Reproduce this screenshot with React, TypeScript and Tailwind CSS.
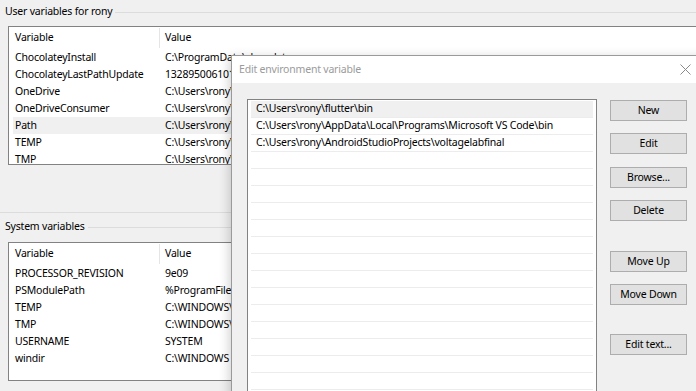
import React from "react";

const font = { fontFamily: '"Noto Sans", "Segoe UI", Arial, sans-serif' };

const userVars = [
  ["ChocolateyInstall", "C:\\ProgramData\\chocolatey"],
  ["ChocolateyLastPathUpdate", "132895006101011234"],
  ["OneDrive", "C:\\Users\\rony\\OneDrive"],
  ["OneDriveConsumer", "C:\\Users\\rony\\OneDrive"],
  ["Path", "C:\\Users\\rony\\flutter\\bin;C:\\Users\\rony\\AppData"],
  ["TEMP", "C:\\Users\\rony\\AppData\\Local\\Temp"],
  ["TMP", "C:\\Users\\rony\\AppData\\Local\\Temp"],
];

const systemVars = [
  ["PROCESSOR_REVISION", "9e09"],
  ["PSModulePath", "%ProgramFiles%\\WindowsPowerShell\\Modules"],
  ["TEMP", "C:\\WINDOWS\\TEMP"],
  ["TMP", "C:\\WINDOWS\\TEMP"],
  ["USERNAME", "SYSTEM"],
  ["windir", "C:\\WINDOWS"],
];

const pathEntries = [
  "C:\\Users\\rony\\flutter\\bin",
  "C:\\Users\\rony\\AppData\\Local\\Programs\\Microsoft VS Code\\bin",
  "C:\\Users\\rony\\AndroidStudioProjects\\voltagelabfinal",
];

// Segoe UI 9pt stand-in
const txt = "text-[10.5px] tracking-[-0.2px] text-[#000]";

function GroupLabel({ text }: { text: string }) {
  return (
    <div className="flex items-center h-[24px] shrink-0">
      <span className={`pl-[5px] pr-[3px] ${txt} whitespace-nowrap`}>{text}</span>
      <div className="flex-1 h-px bg-[#dcdcdc]" />
    </div>
  );
}

function VarList({ rows, selected }: { rows: string[][]; selected?: number }) {
  return (
    <div className="ml-[8px] w-[720px] h-[139px] shrink-0 bg-white border border-[#828282] overflow-hidden">
      <div className={`flex h-[22px] items-center ${txt}`}>
        <div className="w-[150px] pl-[6px]">Variable</div>
        <div className="w-px h-[20px] bg-[#e5e5e5]" />
        <div className="pl-[5px]">Value</div>
      </div>
      <div className="px-[4px]">
        {rows.map(([k, v], i) => (
          <div
            key={k + i}
            className={`flex h-[17px] items-center ${txt} whitespace-nowrap ${
              i === selected ? "bg-[#f0f0f0]" : ""
            }`}
          >
            <div className="w-[147px] pl-[2px] shrink-0">{k}</div>
            <div className="pl-[5px]">{v}</div>
          </div>
        ))}
      </div>
    </div>
  );
}

function Btn({ label, mt }: { label: string; mt: string }) {
  return (
    <div
      className={`${mt} w-[77px] h-[21px] shrink-0 flex items-center justify-center bg-[#e1e1e1] border border-[#adadad] ${txt}`}
    >
      {label}
    </div>
  );
}

export default function App() {
  return (
    <div className="relative w-[696px] h-[391px] overflow-hidden bg-[#f0f0f0]" style={font}>
      <div className="flex flex-col">
        <GroupLabel text="User variables for rony" />
        <div className="h-[2px] shrink-0" />
        <VarList rows={userVars} selected={4} />
        <div className="h-[47px] shrink-0" />
        <div className="h-px bg-[#dcdcdc] shrink-0" />
        <div className="h-[2px] shrink-0" />
        <GroupLabel text="System variables" />
        <div className="h-[3px] shrink-0" />
        <VarList rows={systemVars} />
      </div>

      {/* Edit environment variable dialog */}
      <div className="absolute left-[231px] top-[55px] w-[478px] h-[400px] flex flex-col border border-[#9a9a9a] bg-[#f0f0f0] shadow-[-2px_2px_10px_rgba(0,0,0,0.18)]">
        <div className="flex items-center h-[27px] shrink-0 bg-white">
          <span className="pl-[7px] text-[10.5px] tracking-[-0.2px] text-[#9b9b9b]">Edit environment variable</span>
          <div className="ml-auto w-[46px] h-full flex items-center justify-center">
            <svg width="11" height="11" viewBox="0 0 11 11">
              <path d="M0.5 0.5 L10.5 10.5 M10.5 0.5 L0.5 10.5" stroke="#8a8a8a" strokeWidth="1" fill="none" />
            </svg>
          </div>
        </div>
        <div className="flex pl-[15px] pt-[16px]">
          <div className="w-[350px] h-[340px] shrink-0 bg-white border border-[#828282] pt-[1px] px-[3px] overflow-hidden">
            {Array.from({ length: 19 }).map((_, i) => (
              <div
                key={i}
                className={`h-[17px] flex items-center pl-[5px] ${txt} whitespace-nowrap border-b border-[#ececec] ${
                  i === 0 ? "bg-[#f0f0f0]" : ""
                }`}
              >
                {pathEntries[i] ?? ""}
              </div>
            ))}
          </div>
          <div className="flex flex-col ml-[13px] pt-[1px]">
            <Btn label="New" mt="mt-0" />
            <Btn label="Edit" mt="mt-[12px]" />
            <Btn label="Browse..." mt="mt-[13px]" />
            <Btn label="Delete" mt="mt-[12px]" />
            <Btn label="Move Up" mt="mt-[30px]" />
            <Btn label="Move Down" mt="mt-[12px]" />
            <Btn label="Edit text..." mt="mt-[29px]" />
          </div>
        </div>
      </div>
    </div>
  );
}
